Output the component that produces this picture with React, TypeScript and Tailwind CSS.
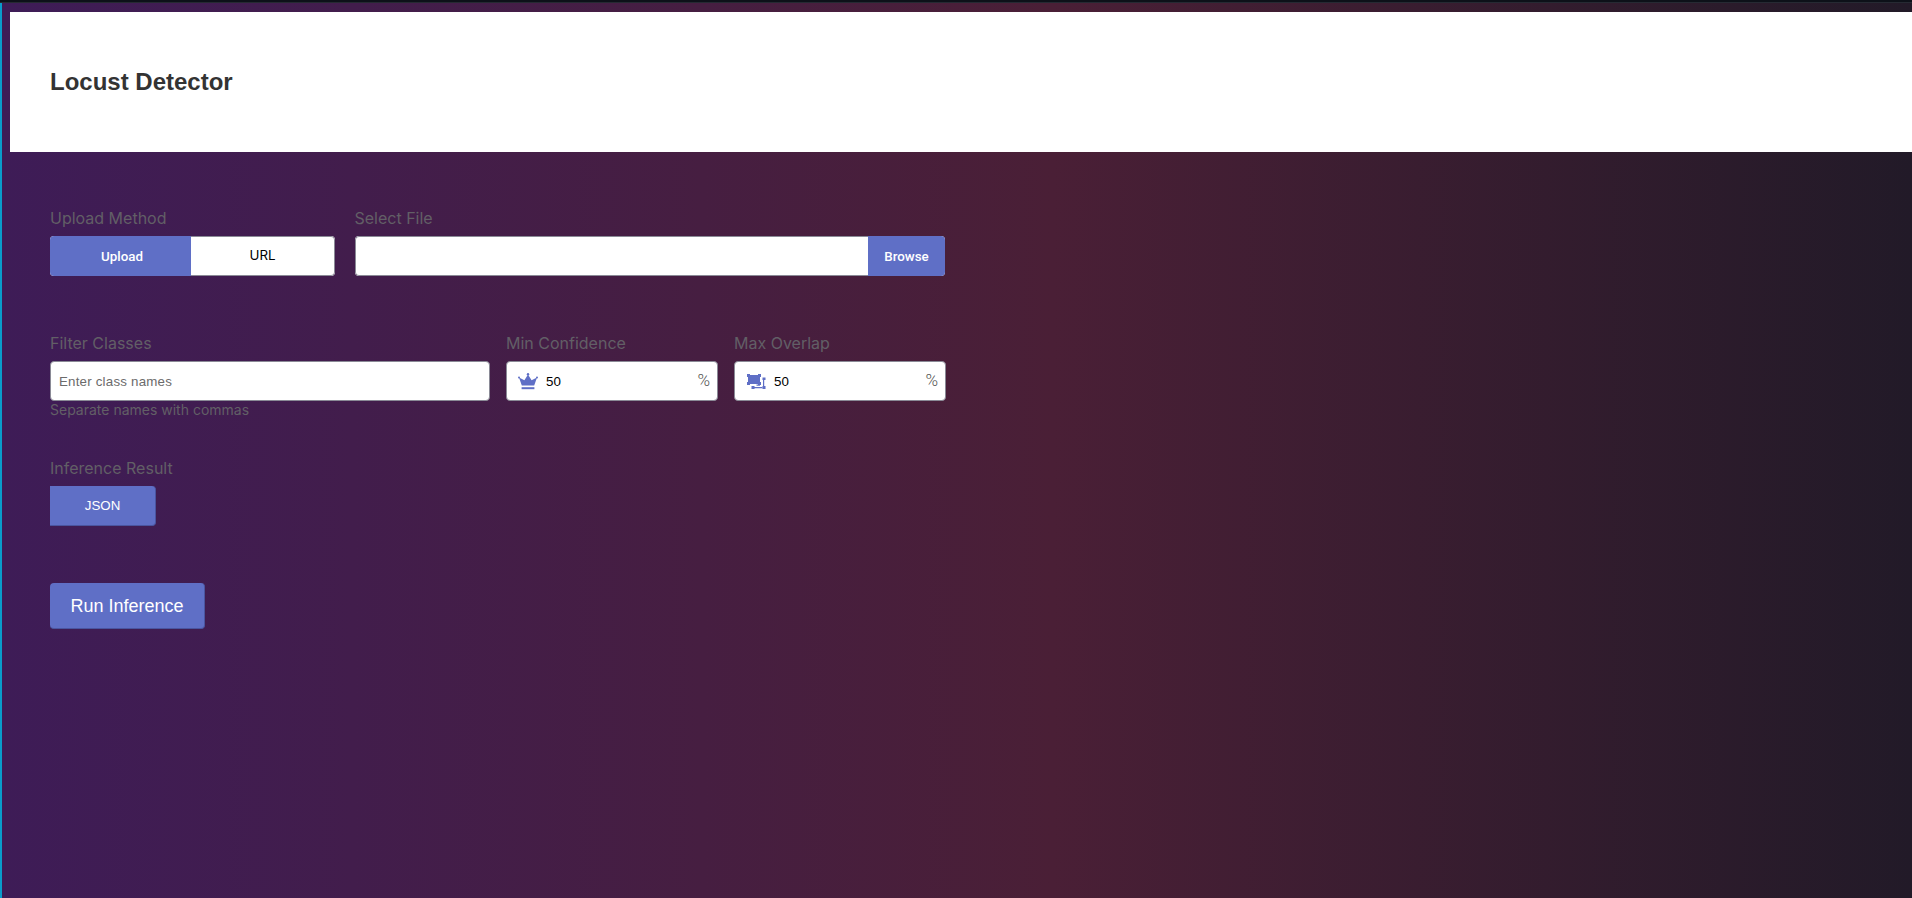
export default function App() {
  const label = "block font-['Inter',sans-serif] text-base leading-6 text-[#625f66] mb-[6px]";
  return (
    <div className="h-[898px] overflow-hidden flex flex-col bg-[#0b0f17]">
      <div className="h-[3px] shrink-0 bg-[#0d1119] border-b border-[#262a33]" />
      <div className="flex-1 flex flex-col border-l-[2px] border-[#0a9ccb] bg-[linear-gradient(90deg,#3e1c57_0%,#4a1f36_55%,#221a28_100%)]">
        <header className="ml-[8px] mt-[9px] h-[140px] shrink-0 bg-white flex items-center pl-[40px] pb-[1px]">
          <h1 className="font-['Liberation_Sans',sans-serif] font-bold text-2xl text-[#333333]">Locust Detector</h1>
        </header>

        <main className="pl-[48px] pt-[54px] w-[896px] box-content">
          <div className="flex gap-[19.5px]">
            <div className="w-[285px]">
              <span className={label}>Upload Method</span>
              <div className="flex h-10 rounded-[4px] overflow-hidden bg-white">
                <button className="w-[141px] bg-[#5f6fc6] text-white font-['Roboto',sans-serif] font-medium text-[13.33px] pl-[3px] pt-[1px]">Upload</button>
                <button className="flex-1 text-black font-['Inter',sans-serif] text-[13.33px] border-y border-r border-[#8a8a96] rounded-r-[4px]">URL</button>
              </div>
            </div>
            <div className="w-[590.5px]">
              <span className={label}>Select File</span>
              <div className="flex h-10 rounded-[4px] overflow-hidden bg-white">
                <div className="flex-1 border-y border-l border-[#8a8a96] rounded-l-[4px]" />
                <button className="w-[77px] bg-[#5f6fc6] text-white font-['Roboto',sans-serif] font-medium text-[13.33px] pt-[1px]">Browse</button>
              </div>
            </div>
          </div>

          <div className="flex gap-4 mt-[55px]">
            <div className="w-[440px]">
              <span className={label}>Filter Classes</span>
              <input
                placeholder="Enter class names"
                className="w-full h-10 rounded-[4px] bg-white px-[8px] border border-[#8a8a96] font-['Liberation_Sans',sans-serif] text-[13.33px] tracking-[0.2px] placeholder:text-[#6b6b6b] outline-none"
              />
              <p className="-mt-px font-['Inter',sans-serif] text-sm leading-5 text-[#625f66]">Separate names with commas</p>
            </div>
            <NumberField title="Min Confidence" icon={<Crown />} />
            <NumberField title="Max Overlap" icon={<Overlap />} />
          </div>

          <div className="mt-[36px]">
            <span className={label}>Inference Result</span>
            <button className="w-[106px] h-10 rounded-r-[4px] bg-[#5f6fc6] text-white font-['Liberation_Sans',sans-serif] text-[13.33px] border-b border-r border-[#4a559f] pt-[1px]">JSON</button>
          </div>

          <button className="block mt-[57px] w-[155px] h-[46px] rounded-[4px] bg-[#5f6fc6] border-b border-r border-[#4a559f] text-white font-['Liberation_Sans',sans-serif] text-lg">Run Inference</button>
        </main>
      </div>
    </div>
  );
}

function NumberField({ title, icon }: { title: string; icon: React.ReactNode }) {
  return (
    <div className="w-[212px]">
      <span className="block font-['Inter',sans-serif] text-base leading-6 text-[#625f66] mb-[6px]">{title}</span>
      <div className="h-10 rounded-[4px] bg-white border border-[#8a8a96] flex items-center pl-[10px] pr-[7px]">
        <span className="w-[22px] flex justify-center">{icon}</span>
        <span className="ml-[7px] pt-[1px] font-['Liberation_Sans',sans-serif] text-[13.33px] text-black">50</span>
        <span className="ml-auto font-['Roboto',sans-serif] font-light text-[17px] leading-none text-[#555] -translate-y-px">%</span>
      </div>
    </div>
  );
}

function Crown() {
  return (
    <svg width="20" height="17" viewBox="0 0 20 17" fill="#5f6fc6">
      <circle cx="10" cy="1.2" r="1.2" />
      <circle cx="1" cy="4.6" r="1" />
      <circle cx="19" cy="4.6" r="1" />
      <path d="M10 1.5 13.6 7.2 19 4.6 16.2 12.6H3.8L1 4.6 6.4 7.2Z" />
      <rect x="3.6" y="14.2" width="12.8" height="2" />
    </svg>
  );
}

function Overlap() {
  return (
    <svg width="19" height="15" viewBox="0 0 19 15" fill="#5f6fc6">
      <rect x="1" y="1" width="12" height="9" />
      <rect x="0" y="0" width="3" height="3" />
      <rect x="11" y="0" width="3" height="3" />
      <rect x="0" y="8" width="3" height="3" />
      <rect x="11" y="8" width="3" height="3" />
      <path d="M16 4.5h1.2v8H16zM5.5 13h10v1.2h-10zM9.5 10.5h3.5v1.2H9.5z" />
      <rect x="15.5" y="3.5" width="3" height="2.5" />
      <rect x="15.5" y="12" width="3" height="3" />
      <rect x="4.5" y="12" width="3" height="3" />
    </svg>
  );
}
